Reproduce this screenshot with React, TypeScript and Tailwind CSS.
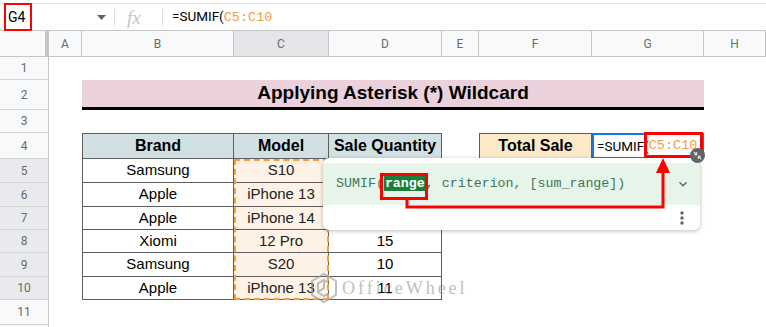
import clsx from "clsx";

const colW = ["w-[33px]", "w-[152px]", "w-[95px]", "w-[113px]", "w-[37px]", "w-[113px]", "w-[112px]", "w-[62px]"];
const letters = ["A", "B", "C", "D", "E", "F", "G", "H"];
const rowH = ["h-[23px]", "h-[30px]", "h-[23px]", "h-[26px]", "h-[24px]", "h-[24px]", "h-[23px]", "h-[23px]", "h-[24px]", "h-[23px]", "h-[25px]", "h-[25px]"];

const table = [
  ["Brand", "Model", "Sale Quantity"],
  ["Samsung", "S10", ""],
  ["Apple", "iPhone 13", ""],
  ["Apple", "iPhone 14", ""],
  ["Xiomi", "12 Pro", "15"],
  ["Samsung", "S20", "10"],
  ["Apple", "iPhone 13", "11"],
];

function FormulaBar() {
  return (
    <div className="h-[30px] pt-[3px]">
      <div className="h-[27px] border-t border-[#e3e3e3] flex items-center font-['Roboto',sans-serif]">
        <div className="w-[114px] flex items-center justify-between pl-[8px] pr-[8px]">
          <span className="text-[14px] text-black">G4</span>
          <svg width="9" height="5" viewBox="0 0 9 5">
            <path d="M0 0 L9 0 L4.5 5 Z" fill="#5f6368" />
          </svg>
        </div>
        <div className="w-px h-[17px] bg-[#dadce0]" />
        <div className="w-[47px] pl-[12px] text-[19px] italic text-[#c4c4c4] font-['Liberation_Serif',serif] leading-none">fx</div>
        <div className="w-px h-[17px] bg-[#dadce0]" />
        <div className="ml-[9px] text-[13.5px] text-black whitespace-nowrap">
          =SUMIF(<span className="text-[#f29c4a] font-['Liberation_Mono',monospace]">C5:C10</span>
        </div>
      </div>
    </div>
  );
}

function ColumnHeaders() {
  return (
    <div className="flex h-[27px] border-t border-b border-[#c4c7c5] bg-[#f8f9fa] font-['Roboto',sans-serif] text-[12px] text-[#6b6b6b]">
      <div className="w-[49px] border-r-[4px] border-[#c4c7c5] bg-[#f8f9fa]" />
      {letters.map((l, i) => (
        <div
          key={l}
          className={clsx(
            colW[i],
            "shrink-0 flex items-center justify-center border-r border-[#c4c7c5]",
            l === "C" && "bg-[#e4e6ea]"
          )}
        >
          {l}
        </div>
      ))}
    </div>
  );
}

function RowHeaders() {
  return (
    <div className="w-[49px] shrink-0 border-r border-[#c4c7c5] bg-[#f8f9fa] font-['Roboto',sans-serif] text-[12px] text-[#6b6b6b]">
      {rowH.map((h, i) => (
        <div
          key={i}
          className={clsx(
            h,
            "flex items-center justify-center border-b border-[#d3d3d3]",
            i >= 4 && i <= 9 && "bg-[#e8eaed]"
          )}
        >
          {i < 11 ? i + 1 : ""}
        </div>
      ))}
    </div>
  );
}

function DataTable() {
  return (
    <div className="col-start-2 col-span-3 row-start-4 row-span-7 grid grid-cols-[152px_95px_113px] grid-rows-[26px_24px_24px_23px_23px_24px_23px]">
      {table.map((row, r) =>
        row.map((v, c) => (
          <div
            key={r + "-" + c}
            className={clsx(
              "flex items-center justify-center border-r border-b border-[#5e5e5e] whitespace-nowrap",
              c === 0 && "border-l",
              r === 0 && "border-t bg-[#d0e0e3] font-bold text-[16px]",
              r > 0 && "text-[15px]",
              r > 0 && c === 1 && "bg-[#fdf2e5] text-[#222]"
            )}
          >
            {v}
          </div>
        ))
      )}
    </div>
  );
}

function Popup() {
  return (
    <div className="absolute left-[323px] top-[158px] w-[377px] h-[72px] bg-white rounded-[6px] shadow-[0_1px_4px_rgba(0,0,0,0.28)] pt-[5px] overflow-hidden">
      <div className="h-[42px] bg-[#e6f4ea] flex items-center justify-between pl-[13px] pr-[10px]">
        <span className="font-['Liberation_Mono',monospace] text-[13.3px] text-[#3f7656] whitespace-nowrap">
          SUMIF(<span className="bg-[#188038] text-white font-bold px-[1px]">range</span>, criterion, [sum_range])
        </span>
        <svg width="14" height="14" viewBox="0 0 24 24" fill="none" stroke="#5f6368" strokeWidth="2.4">
          <path d="M6 9l6 6 6-6" />
        </svg>
      </div>
      <div className="h-[25px] flex items-center justify-end pr-[16px]">
        <svg width="4" height="14" viewBox="0 0 4 14">
          <circle cx="2" cy="2" r="1.7" fill="#5f6368" />
          <circle cx="2" cy="7" r="1.7" fill="#5f6368" />
          <circle cx="2" cy="12" r="1.7" fill="#5f6368" />
        </svg>
      </div>
    </div>
  );
}

function Watermark() {
  return (
    <div className="absolute left-[310px] top-[272px] flex items-center gap-[4px] opacity-60 pointer-events-none">
      <svg width="28" height="32" viewBox="0 0 28 32" fill="none" stroke="#8e99a6" strokeWidth="2">
        <path d="M14 2 L26 9 L26 23 L14 30 L2 23 L2 9 Z" />
        <path d="M19 11 L14 8 L8 11.5 L8 20.5 L14 24 L19 21" />
        <path d="M14 8 L14 16 L8 20" />
      </svg>
      <span className="font-['Liberation_Serif',serif] text-[18px] tracking-[3px] text-[#8e99a6]">OfficeWheel</span>
    </div>
  );
}

export default function App() {
  return (
    <div className="relative w-[766px] h-[327px] overflow-hidden bg-white font-['Liberation_Sans',Arial,sans-serif] text-black">
      <FormulaBar />
      <ColumnHeaders />
      <div className="flex">
        <RowHeaders />
        <div className="grid grid-cols-[33px_152px_95px_113px_37px_113px_112px_62px] grid-rows-[23px_30px_23px_26px_24px_24px_23px_23px_24px_23px_25px_25px]">
          <div className="col-start-2 col-span-6 row-start-2 bg-[#ead1dc] border-b-[3px] border-black flex items-center justify-center font-bold text-[19px]">
            Applying Asterisk (*) Wildcard
          </div>
          <DataTable />
          <div className="col-start-3 row-start-5 row-span-6 border-2 border-dashed border-[#f5a03c]" />
          <div className="col-start-6 row-start-4 bg-[#fce9c8] border border-[#5e5e5e] flex items-center justify-center font-bold text-[16px]">
            Total Sale
          </div>
          <div className="col-start-7 row-start-4 border-2 border-[#1a73e8] bg-white flex items-center pl-[3px] whitespace-nowrap text-[13.5px] font-['Roboto',sans-serif] overflow-visible">
            =SUMIF(<span className="text-[#f29c4a] font-['Liberation_Mono',monospace]">C5:C10</span>
          </div>
        </div>
      </div>

      <Popup />
      <Watermark />

      {/* annotation boxes */}
      <div className="absolute left-[4px] top-[3px] w-[28px] h-[28px] border-2 border-[#ff0000]" />
      <div className="absolute left-[644px] top-[132px] w-[59px] h-[26px] border-[3px] border-[#ff0000]" />
      <div className="absolute left-[380px] top-[173px] w-[48px] h-[27px] border-[3px] border-[#ff0000]" />
      <svg className="absolute left-0 top-0 pointer-events-none" width="766" height="327">
        <polyline points="407,199 407,207 663,207 663,170" fill="none" stroke="#ff0000" strokeWidth="3" />
        <polygon points="656,173 670,173 663,158" fill="#ff0000" />
      </svg>
      <div className="absolute left-[690px] top-[148px] w-[15px] h-[15px] rounded-full bg-[#606368] flex items-center justify-center">
        <svg width="9" height="9" viewBox="0 0 10 10" fill="none" stroke="#e8e8e8" strokeWidth="1.4">
          <path d="M1 1 L4 4 M4 1.5 L4 4 L1.5 4 M9 9 L6 6 M6 8.5 L6 6 L8.5 6" />
        </svg>
      </div>
    </div>
  );
}
